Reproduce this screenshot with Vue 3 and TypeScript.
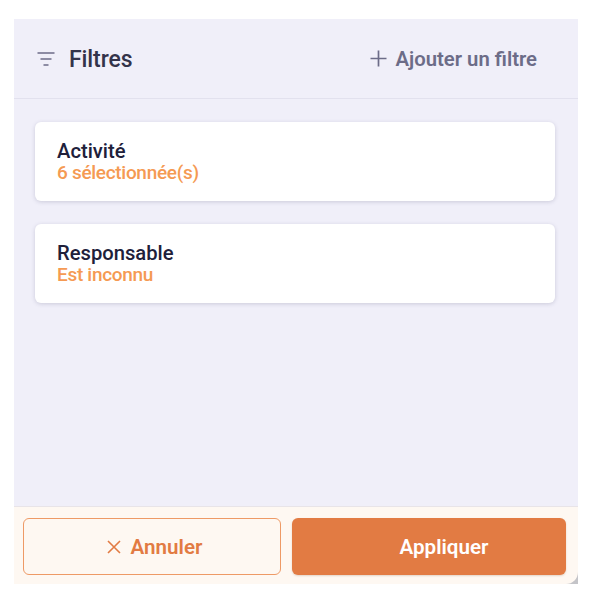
<script setup lang="ts">
const filters: { name: string; value: string }[] = [
  { name: 'Activité', value: '6 sélectionnée(s)' },
  { name: 'Responsable', value: 'Est inconnu' },
]
</script>

<template>
  <div class="page">
    <section class="panel">
      <header class="head">
        <div class="title">
          <svg class="filter-icon" width="18" height="16" viewBox="0 0 18 16" fill="none" stroke="#6c6c88" stroke-width="1.6">
            <path d="M0.5 2h17M3.5 8h11M6.5 14h5" />
          </svg>
          <h1>Filtres</h1>
        </div>
        <div class="add">
          <svg width="17" height="17" viewBox="0 0 17 17" fill="none" stroke="#6c6c88" stroke-width="1.7">
            <path d="M8.5 0.5v16M0.5 8.5h16" />
          </svg>
          <span>Ajouter un filtre</span>
        </div>
      </header>
      <main class="list">
        <article v-for="f in filters" :key="f.name" class="card">
          <div class="name">{{ f.name }}</div>
          <div class="value">{{ f.value }}</div>
        </article>
      </main>
      <footer class="foot">
        <button class="btn cancel" type="button">
          <svg width="14" height="14" viewBox="0 0 14 14" fill="none" stroke="#e27b43" stroke-width="1.6">
            <path d="M1 1l12 12M13 1L1 13" />
          </svg>
          <span>Annuler</span>
        </button>
        <button class="btn apply" type="button">Appliquer</button>
      </footer>
    </section>
  </div>
</template>

<style scoped>
.page {
  width: 600px;
  height: 610px;
  padding: 19px 22px 0 14px;
  box-sizing: border-box;
  background: #fff;
  font-family: Roboto, "Liberation Sans", sans-serif;
}
.panel {
  width: 564px;
  height: 565px;
  display: flex;
  flex-direction: column;
  background: linear-gradient(135deg, #f0eff9 97.5%, #c4c4c8 97.5%);
}
.head {
  height: 80px;
  flex: none;
  box-sizing: border-box;
  display: flex;
  align-items: center;
  justify-content: space-between;
  padding: 0 41px 0 23px;
  background: #f0eff9;
  border-bottom: 1px solid #e2e1ee;
}
.title {
  display: flex;
  align-items: center;
  gap: 14px;
}
h1 {
  margin: 1px 0 0;
  font-size: 23px;
  font-weight: 500;
  color: #33334a;
  letter-spacing: -0.1px;
}
.add {
  display: flex;
  align-items: center;
  gap: 9px;
  font-size: 20.3px;
  font-weight: 600;
  color: #6c6c88;
}
.list {
  flex: 1;
  display: flex;
  flex-direction: column;
  gap: 23px;
  padding: 23px 23px 0 21px;
  background: #f0eff9;
}
.card {
  height: 79px;
  box-sizing: border-box;
  padding: 18px 22px 0;
  background: #fff;
  border-radius: 6px;
  box-shadow: 0 1px 4px rgba(60, 60, 100, 0.2);
  line-height: 22px;
}
.name {
  font-size: 20.2px;
  font-weight: 500;
  color: #20203a;
}
.value {
  font-size: 19px;
  font-weight: 500;
  color: #f59a53;
  letter-spacing: -0.3px;
}
.foot {
  height: 78px;
  flex: none;
  box-sizing: border-box;
  display: flex;
  gap: 11px;
  padding: 11px 12px 9px 9px;
  background: #fef8f2;
  border-top: 1px solid #e8e4e8;
  border-bottom-right-radius: 12px;
}
.btn {
  border-radius: 6px;
  font-family: inherit;
  font-size: 20.6px;
  font-weight: 600;
  display: flex;
  align-items: center;
  justify-content: center;
  gap: 10px;
}
.cancel {
  width: 258px;
  padding-left: 11px;
  background: #fef8f2;
  border: 1px solid #ee9a66;
  color: #e27b43;
}
.apply {
  flex: 1;
  padding-left: 36px;
  background: #e27b43;
  border: none;
  color: #fff;
  box-shadow: 0 1px 2px rgba(120, 70, 30, 0.2);
}
</style>
